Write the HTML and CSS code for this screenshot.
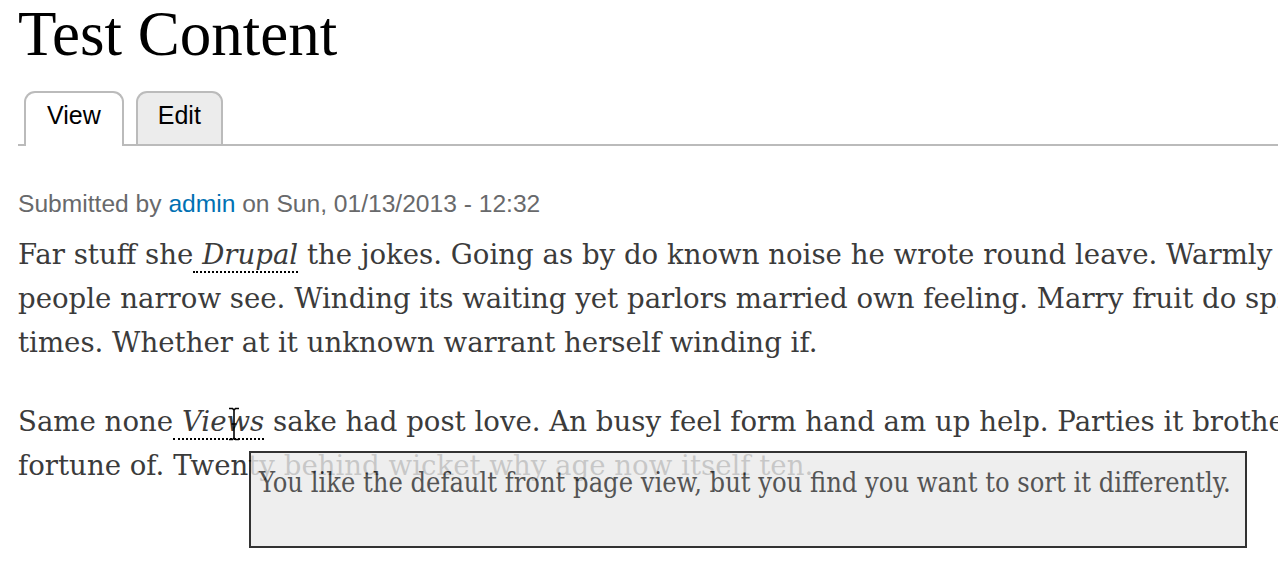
FILE: index.html
```html
<!DOCTYPE html>
<html lang="en">
<head>
<meta charset="utf-8">
<title>Test Content</title>
<link rel="stylesheet" href="styles.css">
</head>
<body>
<div class="page">
  <h1 class="title">Test Content</h1>
  <ul class="tabs">
    <li class="tab active"><a href="#">View</a></li>
    <li class="tab"><a href="#">Edit</a></li>
  </ul>
  <div class="meta">Submitted by <a href="#">admin</a> on Sun, 01/13/2013 - 12:32</div>
  <div class="content">
    <p>Far stuff she<span class="term"> <em>Drupal</em></span> the jokes. Going as by do known noise he wrote round leave. Warmly put branch people narrow see. Winding its waiting yet parlors married own feeling. Marry fruit do spite jokes an times. Whether at it unknown warrant herself winding if.</p>
    <p class="hovered">Same none<span class="term"> <em>Views</em></span> sake had post love. An busy feel form hand am up help. Parties it brother amongst an fortune of. Twenty behind wicket why age now itself ten.<svg class="cursor" width="12" height="34" viewBox="0 0 12 34"><path d="M1 1.5h3.5L6 3l1.5-1.5H11M6 3v28M1 32.5h3.5L6 31l1.5 1.5H11M3.5 17h5" fill="none" stroke="#000" stroke-width="1.6"/></svg><span class="tooltip">You like the default front page view, but you find you want to sort it differently.</span></p>
  </div>
</div>
</body>
</html>
```

FILE: styles.css
```css
html {
  overflow: hidden;
  background: #fff;
}

body {
  margin: 0;
  padding: 0;
  min-height: 564px;
}

.page {
  width: 1580px;
  min-height: 564px;
  padding: 0 18px;
}

.title {
  margin: 0;
  font-family: "Liberation Serif", "Times New Roman", serif;
  font-weight: normal;
  font-size: 63px;
  line-height: 68px;
  color: #000;
}

.tabs {
  list-style: none;
  margin: 23px 0 0 0;
  padding: 0 0 0 6px;
  display: flex;
  align-items: flex-start;
  gap: 12px;
  border-bottom: 2px solid #bbb;
  width: 1540px;
}

.tab a {
  display: block;
  font-family: "Liberation Sans", Arial, sans-serif;
  font-size: 25px;
  line-height: 30px;
  color: #000;
  text-decoration: none;
  padding: 7px 20px 14px 20px;
  background: #ececec;
  border: 2px solid #bbb;
  border-bottom: none;
  border-radius: 11px 11px 0 0;
}

.tab.active {
  margin-bottom: -2px;
}

.tab.active a {
  background: #fff;
  padding-left: 21px;
  padding-right: 21px;
  padding-bottom: 16px;
}

.meta {
  margin-top: 45px;
  font-family: "Liberation Sans", Arial, sans-serif;
  font-size: 24.6px;
  line-height: 26px;
  color: #68696b;
}

.meta a {
  color: #0071b3;
  text-decoration: none;
}

.content {
  width: 1480px;
  margin-top: 16px;
  font-family: "DejaVu Serif", Georgia, serif;
  font-size: 27.6px;
  line-height: 44px;
  color: #3b3b3b;
}

.content p {
  margin: 0 0 35px 0;
}

.hovered {
  position: relative;
}

.term {
  border-bottom: 2px dotted #000;
}

.term em {
  font-style: italic;
}

.cursor {
  position: absolute;
  left: 210px;
  top: 7px;
}

.tooltip {
  position: absolute;
  left: 231px;
  top: 51px;
  box-sizing: border-box;
  width: 998px;
  height: 97px;
  padding: 15px 8px 0 8px;
  background: #ebebeb;
  border: 2px solid #000;
  color: #2a2a2a;
  opacity: 0.8;
  font-family: "DejaVu Serif Condensed", "DejaVu Serif", Georgia, serif;
  font-stretch: condensed;
  font-size: 27px;
  line-height: 30px;
  white-space: nowrap;
  z-index: 2;
}
```
